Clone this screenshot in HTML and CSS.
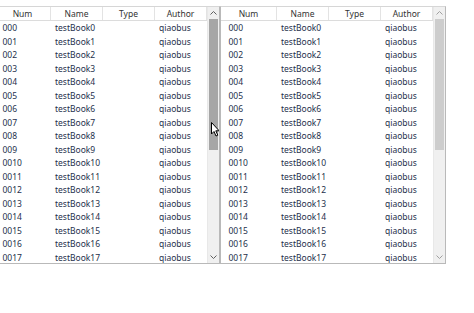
FILE: index.html
```html
<!DOCTYPE html>
<html>
<head>
<meta charset="utf-8">
<link rel="stylesheet" href="styles.css">
</head>
<body>
<div class="page">
  <div class="grid">
    <div class="table">
      <div class="row head"><div class="c">Num</div><div class="c">Name</div><div class="c">Type</div><div class="c">Author</div></div>
      <div class="row"><div class="c">000</div><div class="c">testBook0</div><div class="c"></div><div class="c">qiaobus</div></div>
      <div class="row"><div class="c">001</div><div class="c">testBook1</div><div class="c"></div><div class="c">qiaobus</div></div>
      <div class="row"><div class="c">002</div><div class="c">testBook2</div><div class="c"></div><div class="c">qiaobus</div></div>
      <div class="row"><div class="c">003</div><div class="c">testBook3</div><div class="c"></div><div class="c">qiaobus</div></div>
      <div class="row"><div class="c">004</div><div class="c">testBook4</div><div class="c"></div><div class="c">qiaobus</div></div>
      <div class="row"><div class="c">005</div><div class="c">testBook5</div><div class="c"></div><div class="c">qiaobus</div></div>
      <div class="row"><div class="c">006</div><div class="c">testBook6</div><div class="c"></div><div class="c">qiaobus</div></div>
      <div class="row"><div class="c">007</div><div class="c">testBook7</div><div class="c"></div><div class="c">qiaobus</div></div>
      <div class="row"><div class="c">008</div><div class="c">testBook8</div><div class="c"></div><div class="c">qiaobus</div></div>
      <div class="row"><div class="c">009</div><div class="c">testBook9</div><div class="c"></div><div class="c">qiaobus</div></div>
      <div class="row"><div class="c">0010</div><div class="c">testBook10</div><div class="c"></div><div class="c">qiaobus</div></div>
      <div class="row"><div class="c">0011</div><div class="c">testBook11</div><div class="c"></div><div class="c">qiaobus</div></div>
      <div class="row"><div class="c">0012</div><div class="c">testBook12</div><div class="c"></div><div class="c">qiaobus</div></div>
      <div class="row"><div class="c">0013</div><div class="c">testBook13</div><div class="c"></div><div class="c">qiaobus</div></div>
      <div class="row"><div class="c">0014</div><div class="c">testBook14</div><div class="c"></div><div class="c">qiaobus</div></div>
      <div class="row"><div class="c">0015</div><div class="c">testBook15</div><div class="c"></div><div class="c">qiaobus</div></div>
      <div class="row"><div class="c">0016</div><div class="c">testBook16</div><div class="c"></div><div class="c">qiaobus</div></div>
      <div class="row"><div class="c">0017</div><div class="c">testBook17</div><div class="c"></div><div class="c">qiaobus</div></div>
    </div>
    <div class="vscroll">
      <div class="arrow"><svg width="7" height="4" viewBox="0 0 7 4"><path d="M0.5 3.5 L3.5 0.5 L6.5 3.5" fill="none" stroke="#606060" stroke-width="1"/></svg></div>
      <div class="thumb dark"></div>
      <div class="track"></div>
      <div class="arrow"><svg width="7" height="4" viewBox="0 0 7 4"><path d="M0.5 0.5 L3.5 3.5 L6.5 0.5" fill="none" stroke="#606060" stroke-width="1"/></svg></div>
    </div>
    <svg class="cursor" width="10" height="16" viewBox="0 0 10 16"><path d="M0.5 0.5 L0.5 12 L3 9.5 L5 14 L6.8 13.2 L4.8 8.8 L8.2 8.8 Z" fill="#fff" stroke="#000" stroke-width="1" stroke-linejoin="miter"/></svg>
  </div>
  <div class="grid">
    <div class="table">
      <div class="row head"><div class="c">Num</div><div class="c">Name</div><div class="c">Type</div><div class="c">Author</div></div>
      <div class="row"><div class="c">000</div><div class="c">testBook0</div><div class="c"></div><div class="c">qiaobus</div></div>
      <div class="row"><div class="c">001</div><div class="c">testBook1</div><div class="c"></div><div class="c">qiaobus</div></div>
      <div class="row"><div class="c">002</div><div class="c">testBook2</div><div class="c"></div><div class="c">qiaobus</div></div>
      <div class="row"><div class="c">003</div><div class="c">testBook3</div><div class="c"></div><div class="c">qiaobus</div></div>
      <div class="row"><div class="c">004</div><div class="c">testBook4</div><div class="c"></div><div class="c">qiaobus</div></div>
      <div class="row"><div class="c">005</div><div class="c">testBook5</div><div class="c"></div><div class="c">qiaobus</div></div>
      <div class="row"><div class="c">006</div><div class="c">testBook6</div><div class="c"></div><div class="c">qiaobus</div></div>
      <div class="row"><div class="c">007</div><div class="c">testBook7</div><div class="c"></div><div class="c">qiaobus</div></div>
      <div class="row"><div class="c">008</div><div class="c">testBook8</div><div class="c"></div><div class="c">qiaobus</div></div>
      <div class="row"><div class="c">009</div><div class="c">testBook9</div><div class="c"></div><div class="c">qiaobus</div></div>
      <div class="row"><div class="c">0010</div><div class="c">testBook10</div><div class="c"></div><div class="c">qiaobus</div></div>
      <div class="row"><div class="c">0011</div><div class="c">testBook11</div><div class="c"></div><div class="c">qiaobus</div></div>
      <div class="row"><div class="c">0012</div><div class="c">testBook12</div><div class="c"></div><div class="c">qiaobus</div></div>
      <div class="row"><div class="c">0013</div><div class="c">testBook13</div><div class="c"></div><div class="c">qiaobus</div></div>
      <div class="row"><div class="c">0014</div><div class="c">testBook14</div><div class="c"></div><div class="c">qiaobus</div></div>
      <div class="row"><div class="c">0015</div><div class="c">testBook15</div><div class="c"></div><div class="c">qiaobus</div></div>
      <div class="row"><div class="c">0016</div><div class="c">testBook16</div><div class="c"></div><div class="c">qiaobus</div></div>
      <div class="row"><div class="c">0017</div><div class="c">testBook17</div><div class="c"></div><div class="c">qiaobus</div></div>
    </div>
    <div class="vscroll">
      <div class="arrow"><svg width="7" height="4" viewBox="0 0 7 4"><path d="M0.5 3.5 L3.5 0.5 L6.5 3.5" fill="none" stroke="#a0a0a0" stroke-width="1"/></svg></div>
      <div class="thumb"></div>
      <div class="track"></div>
      <div class="arrow"><svg width="7" height="4" viewBox="0 0 7 4"><path d="M0.5 0.5 L3.5 3.5 L6.5 0.5" fill="none" stroke="#a0a0a0" stroke-width="1"/></svg></div>
    </div>
  </div>
</div>
</body>
</html>
```
FILE: styles.css
```css
html, body {
  margin: 0;
  padding: 0;
  background: #ffffff;
}
body {
  font-family: "Noto Sans", "Open Sans", sans-serif;
  font-size: 8.5px;
}
.page {
  display: flex;
  padding-top: 6px;
  margin-left: -6px;
}
.grid {
  position: relative;
  display: flex;
  width: 226px;
  height: 258px;
  box-sizing: border-box;
  border: 1px solid #b9b9b9;
  border-top-color: #d6d6d6;
  overflow: hidden;
}
.table {
  display: flex;
  flex-direction: column;
  width: 212px;
}
.row {
  display: grid;
  grid-template-columns: 56px 52px 52px 52px;
  height: 13.5px;
  align-items: center;
  color: #25304c;
}
.row .c {
  padding-left: 4px;
  white-space: nowrap;
  line-height: 13.5px;
}
.row .c:first-child {
  padding-left: 7.5px;
}
.row.head {
  height: 13px;
  color: #333333;
  border-bottom: 1px solid #dcdcdc;
}
.row.head .c {
  padding-left: 0;
  text-align: center;
  border-right: 1px solid #e3e3e3;
  line-height: 13px;
  height: 13px;
}
.vscroll {
  width: 12px;
  display: flex;
  flex-direction: column;
  background: #f0f0f0;
  border-left: 1px solid #e8e8e8;
}
.arrow {
  height: 12px;
  display: flex;
  align-items: center;
  justify-content: center;
}
.thumb {
  height: 131px;
  margin: 0 1px;
  background: #cdcdcd;
}
.thumb.dark {
  background: #a6a6a6;
}
.track {
  flex: 1;
}
.cursor {
  position: absolute;
  left: 216px;
  top: 115px;
}
```
